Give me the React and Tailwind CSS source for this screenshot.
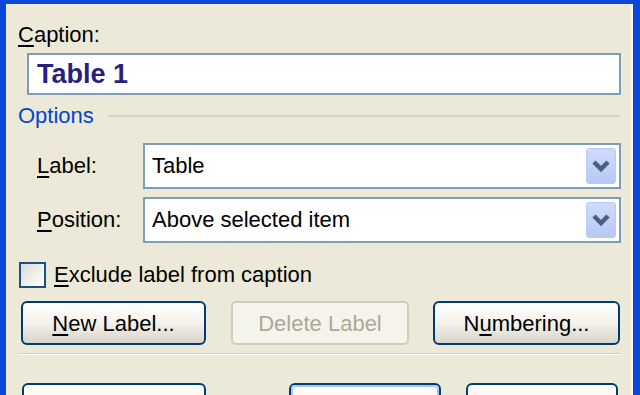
import React from 'react';

const font = "font-['Liberation_Sans',Arial,sans-serif]";

// XP style push button
const XpButton = ({ children, className = '', disabled = false, isDefault = false }) => {
  if (disabled) {
    return (
      <div className={`flex items-center justify-center h-[44px] rounded-[5px] border-2 border-[#cfcdc0] bg-[#f5f4ea] text-[#aca899] ${className}`}>
        {children}
      </div>
    );
  }
  return (
    <div className={`h-[44px] rounded-[6px] border-2 border-[#003c74] bg-linear-to-b from-white via-[#f3f2ec] to-[#d9d5c9] ${className}`}>
      <div
        className={`flex items-center justify-center h-full rounded-[4px] border-2 ${
          isDefault ? 'border-[#a9c6f2]' : 'border-transparent'
        }`}
      >
        {children}
      </div>
    </div>
  );
};

const ComboBox = ({ value }) => (
  <div className="flex-1 flex items-center h-[46px] border-2 border-[#7f9db9] bg-white p-[3px]">
    <span className="flex-1 pl-[4px] leading-[26px]">{value}</span>
    <div className="flex items-center justify-center w-[30px] h-[36px] rounded-[3px] border border-[#b8cbf5] bg-linear-to-b from-[#cedcfb] to-[#b6c9f4]">
      <svg width="20" height="14" viewBox="0 0 20 14">
        <polyline
          points="3,3 10,10 17,3"
          fill="none"
          stroke="#4a5d82"
          strokeWidth="4.5"
          strokeLinejoin="miter"
        />
      </svg>
    </div>
  </div>
);

const U = ({ children }) => <span className="underline underline-offset-[3px] decoration-[2px]">{children}</span>;

export default function App() {
  return (
    <div className={`w-[640px] h-[395px] overflow-hidden bg-[#0b47d9] pt-[4px] pl-[6px] pr-[7px] ${font}`}>
      <div className="h-[460px] bg-[#ece9d8] border-r-2 border-[#f6f5ef] pt-[18px] pl-[12px] pr-[10px] text-[22px] text-black">
        {/* Caption */}
        <div className="leading-[26px]">
          <U>C</U>aption:
        </div>
        <div className="ml-[9px] mt-[5px] flex items-center h-[42px] border-2 border-[#7f9db9] bg-white pl-[8px]">
          <span className="text-[27px] font-bold text-[#2a1f7e] leading-[30px]">Table 1</span>
        </div>

        {/* Options group */}
        <div className="mt-[8px] flex items-center h-[26px]">
          <span className="text-[#0046d5] leading-[26px]">Options</span>
          <div className="flex-1 ml-[14px] mr-[1px] h-[2px] bg-[#d9d6c8]" />
        </div>

        <div className="mt-[14px] flex items-center pl-[19px]">
          <span className="w-[106px] leading-[26px]">
            <U>L</U>abel:
          </span>
          <ComboBox value="Table" />
        </div>
        <div className="mt-[8px] flex items-center pl-[19px]">
          <span className="w-[106px] leading-[26px]">
            <U>P</U>osition:
          </span>
          <ComboBox value="Above selected item" />
        </div>

        {/* Checkbox */}
        <div className="mt-[19px] ml-[1px] flex items-center">
          <div className="w-[27px] h-[26px] border-2 border-[#1c5180] bg-linear-to-br from-[#dcdcd6] to-white" />
          <span className="ml-[8px] leading-[26px]">
            <U>E</U>xclude label from caption
          </span>
        </div>

        {/* Label buttons */}
        <div className="mt-[13px] ml-[3px] flex">
          <XpButton className="w-[185px]">
            <span>
              <U>N</U>ew Label...
            </span>
          </XpButton>
          <XpButton className="w-[178px] ml-[25px]" disabled>
            Delete Label
          </XpButton>
          <XpButton className="w-[187px] ml-[24px]">
            <span>
              N<U>u</U>mbering...
            </span>
          </XpButton>
        </div>

        <div className="mt-[8px] mr-[1px] h-[2px] border-t border-[#d0cdbf] border-b border-b-white" />

        {/* Dialog buttons, only their top edge is in view */}
        <div className="mt-[28px] ml-[4px] flex">
          <XpButton className="w-[184px]" />
          <XpButton className="w-[152px] ml-[83px]" isDefault />
          <XpButton className="w-[152px] ml-[25px]" />
        </div>
      </div>
    </div>
  );
}
